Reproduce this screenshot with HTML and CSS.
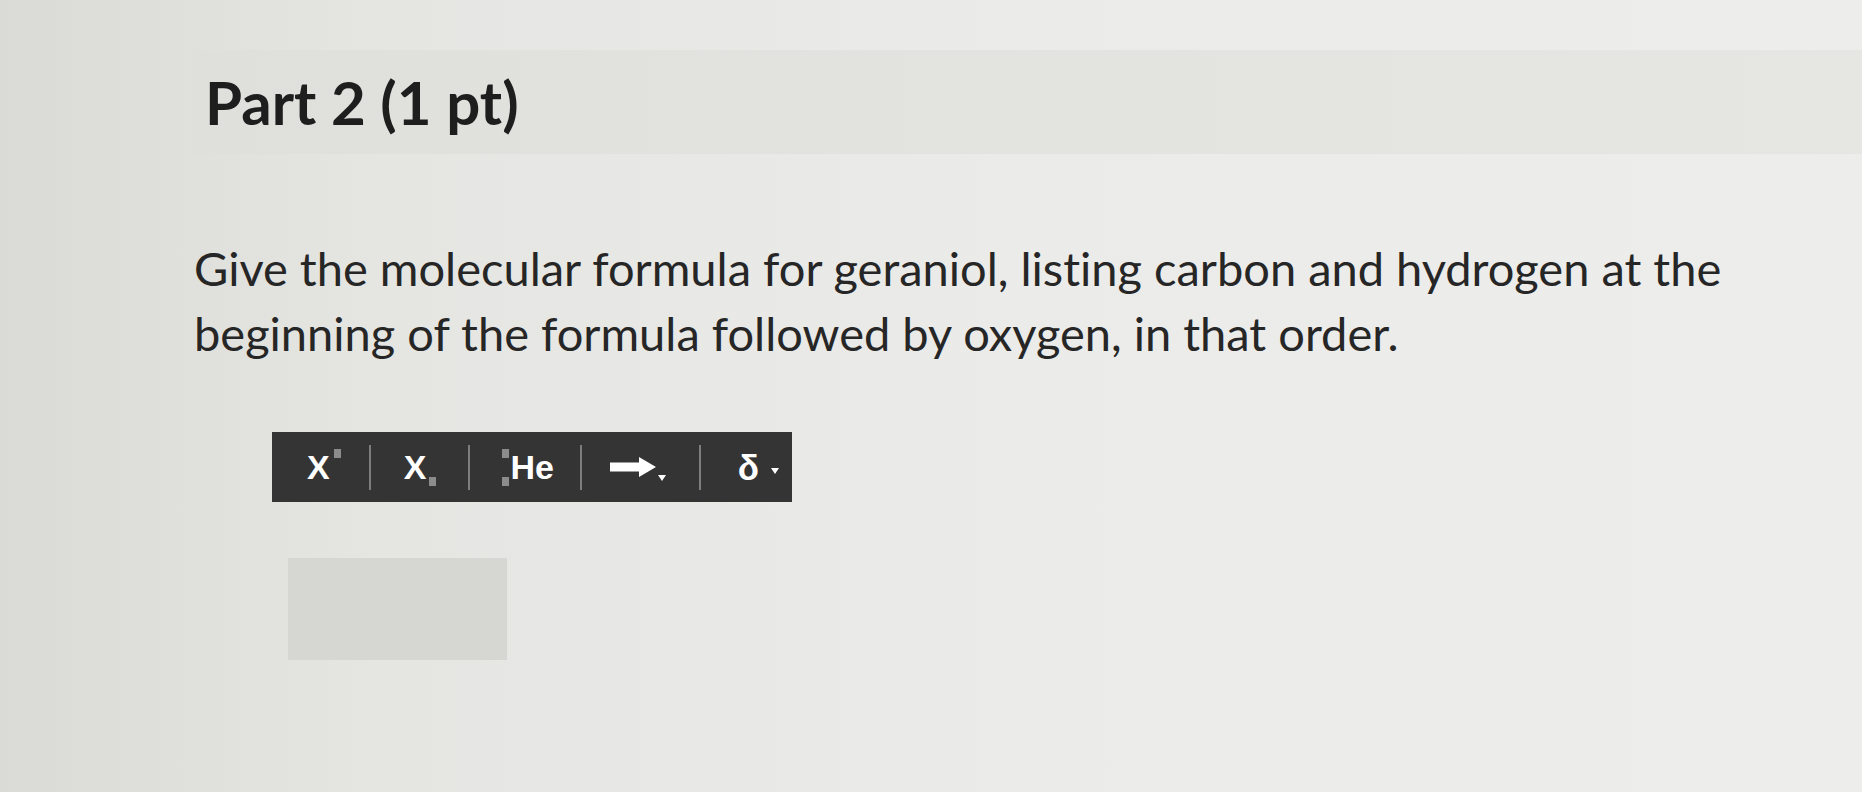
FILE: index.html
```html
<!doctype html>
<html lang="en">

<head>
    <meta charset="UTF-8">
    <title>Part 2</title>
    <link rel="stylesheet" href="styles.css">
</head>

<body>
    <div class="page">
        <header class="part-header">
            <h2 class="part-title">Part 2 (1 pt)</h2>
        </header>

        <section class="question">
            <p class="prompt">
                Give the molecular formula for geraniol, listing carbon and hydrogen at the
                beginning of the formula followed by oxygen, in that order.
            </p>

            <div class="toolbar">
                <span class="tool tool-sup">X<i class="slot slot-sup"></i></span>
                <span class="sep"></span>
                <span class="tool tool-sub">X<i class="slot slot-sub"></i></span>
                <span class="sep"></span>
                <span class="tool tool-iso"><span class="pre"><i class="slot"></i><i class="slot"></i></span>He</span>
                <span class="sep"></span>
                <span class="tool tool-arrow">
                    <svg width="46" height="20" viewBox="0 0 46 20">
                        <path d="M0 5.5h29V0l17 10-17 10v-5.5H0z" fill="#fff" />
                    </svg>
                    <i class="caret caret-low"></i>
                </span>
                <span class="sep"></span>
                <span class="tool tool-delta">δ<i class="caret"></i></span>
            </div>

            <div class="answer-box"></div>
        </section>
    </div>
</body>

</html>
```

FILE: styles.css
```css
* {
    box-sizing: border-box;
    margin: 0;
    padding: 0;
}

body {
    width: 1862px;
    height: 792px;
    overflow: hidden;
    font-family: Lato, "Noto Sans", sans-serif;
    font-variant-ligatures: no-common-ligatures;
    color: #232323;
    background: linear-gradient(90deg, #dadad7 0%, #e5e5e2 20%, #ebebe9 55%, #ededeb 100%);
}

.page {
    padding-top: 50px;
    padding-left: 190px;
}

.part-header {
    height: 104px;
    display: flex;
    align-items: center;
    padding-left: 15px;
    background: linear-gradient(90deg, #dfdfdc 0%, #e3e3e0 50%, #e6e6e3 100%);
}

.part-title {
    font-size: 60px;
    font-weight: 700;
    line-height: 1;
    color: #1e1e1e;
}

.question {
    padding-left: 4px;
}

.prompt {
    margin-top: 82px;
    font-size: 47px;
    line-height: 65px;
    width: 1600px;
    color: #262626;
}

.toolbar {
    display: flex;
    align-items: center;
    width: 520px;
    height: 70px;
    margin-top: 66px;
    margin-left: 78px;
    padding-left: 35px;
    background: #343434;
    font-family: "Liberation Sans", Arial, sans-serif;
    font-weight: 700;
    color: #fff;
}

.tool {
    position: relative;
    display: flex;
    align-items: center;
    font-size: 34px;
    line-height: 1;
}

.sep {
    width: 2px;
    height: 45px;
    background: #7d7d7d;
}

.slot {
    display: block;
    width: 7px;
    height: 9px;
    background: #8c8c8c;
}

.tool-sup {
    align-items: flex-start;
    margin-right: 28px;
}

.tool-sup .slot {
    margin-left: 4px;
    margin-top: -1px;
}

.tool-sub {
    align-items: flex-end;
    margin: 0 32px 0 33px;
}

.tool-sub .slot {
    margin-left: 3px;
    margin-bottom: -2px;
}

.tool-iso {
    margin: 0 26px 0 32px;
}

.tool-iso .pre {
    display: flex;
    flex-direction: column;
    gap: 19px;
    margin-right: 1px;
}

.tool-arrow {
    margin: 0 33px 0 28px;
    align-items: center;
}

.caret {
    display: block;
    width: 0;
    height: 0;
    margin-left: 2px;
    border-left: 4px solid transparent;
    border-right: 4px solid transparent;
    border-top: 6px solid #fff;
}

.caret-low {
    margin-top: 22px;
}

.tool-delta {
    margin-left: 37px;
    font-size: 35px;
}

.tool-delta .caret {
    margin-left: 12px;
    margin-top: 8px;
}

.answer-box {
    width: 219px;
    height: 102px;
    margin-top: 56px;
    margin-left: 94px;
    background: #d6d6d3;
}
```
